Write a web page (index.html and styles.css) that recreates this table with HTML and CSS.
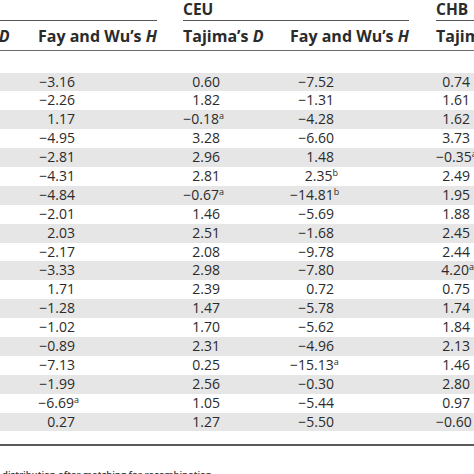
FILE: index.html
```html
<!DOCTYPE html>
<html>
<head>
<meta charset="utf-8">
<link rel="stylesheet" href="styles.css">
</head>
<body>
<div class="table">
  <div class="cols groups">
    <div class="grp grp-yri"></div>
    <div class="grp grp-ceu">CEU</div>
    <div class="grp grp-chb">CHB</div>
  </div>
  <div class="cols heads">
    <div class="hd">Tajima’s <i>D</i></div>
    <div class="hd">Fay and Wu’s <i>H</i></div>
    <div class="hd">Tajima’s <i>D</i></div>
    <div class="hd">Fay and Wu’s <i>H</i></div>
    <div class="hd">Tajima’s <i>D</i></div>
  </div>
  <div class="body">
    <div class="cols row"><div></div><div class="c2">−3.16</div><div class="c3">0.60</div><div class="c4">−7.52</div><div class="c5">0.74</div></div>
    <div class="cols row"><div></div><div class="c2">−2.26</div><div class="c3">1.82</div><div class="c4">−1.31</div><div class="c5">1.61</div></div>
    <div class="cols row"><div></div><div class="c2">1.17</div><div class="c3">−0.18<sup>a</sup></div><div class="c4">−4.28</div><div class="c5">1.62</div></div>
    <div class="cols row"><div></div><div class="c2">−4.95</div><div class="c3">3.28</div><div class="c4">−6.60</div><div class="c5">3.73</div></div>
    <div class="cols row"><div></div><div class="c2">−2.81</div><div class="c3">2.96</div><div class="c4">1.48</div><div class="c5">−0.35<sup>a</sup></div></div>
    <div class="cols row"><div></div><div class="c2">−4.31</div><div class="c3">2.81</div><div class="c4">2.35<sup>b</sup></div><div class="c5">2.49</div></div>
    <div class="cols row"><div></div><div class="c2">−4.84</div><div class="c3">−0.67<sup>a</sup></div><div class="c4">−14.81<sup>b</sup></div><div class="c5">1.95</div></div>
    <div class="cols row"><div></div><div class="c2">−2.01</div><div class="c3">1.46</div><div class="c4">−5.69</div><div class="c5">1.88</div></div>
    <div class="cols row"><div></div><div class="c2">2.03</div><div class="c3">2.51</div><div class="c4">−1.68</div><div class="c5">2.45</div></div>
    <div class="cols row"><div></div><div class="c2">−2.17</div><div class="c3">2.08</div><div class="c4">−9.78</div><div class="c5">2.44</div></div>
    <div class="cols row"><div></div><div class="c2">−3.33</div><div class="c3">2.98</div><div class="c4">−7.80</div><div class="c5">4.20<sup>a</sup></div></div>
    <div class="cols row"><div></div><div class="c2">1.71</div><div class="c3">2.39</div><div class="c4">0.72</div><div class="c5">0.75</div></div>
    <div class="cols row"><div></div><div class="c2">−1.28</div><div class="c3">1.47</div><div class="c4">−5.78</div><div class="c5">1.74</div></div>
    <div class="cols row"><div></div><div class="c2">−1.02</div><div class="c3">1.70</div><div class="c4">−5.62</div><div class="c5">1.84</div></div>
    <div class="cols row"><div></div><div class="c2">−0.89</div><div class="c3">2.31</div><div class="c4">−4.96</div><div class="c5">2.13</div></div>
    <div class="cols row"><div></div><div class="c2">−7.13</div><div class="c3">0.25</div><div class="c4">−15.13<sup>a</sup></div><div class="c5">1.46</div></div>
    <div class="cols row"><div></div><div class="c2">−1.99</div><div class="c3">2.56</div><div class="c4">−0.30</div><div class="c5">2.80</div></div>
    <div class="cols row"><div></div><div class="c2">−6.69<sup>a</sup></div><div class="c3">1.05</div><div class="c4">−5.44</div><div class="c5">0.97</div></div>
    <div class="cols row"><div></div><div class="c2">0.27</div><div class="c3">1.27</div><div class="c4">−5.50</div><div class="c5">−0.60</div></div>
  </div>
  <div class="rule"></div>
</div>
<p class="note">distribution after matching for recombination.</p>
</body>
</html>
```
FILE: styles.css
```css
html, body {
  margin: 0;
  padding: 0;
  background: #ffffff;
  overflow: hidden;
}
body {
  font-family: "Open Sans", "Liberation Sans", sans-serif;
  color: #2b2b2b;
  width: 474px;
  height: 474px;
}
.table {
  margin-left: -71px;
  width: 640px;
}
.cols {
  display: grid;
  grid-template-columns: 109px 145px 107px 146px 107px;
}
.groups {
  height: 21px;
}
.grp {
  font-weight: 700;
  font-size: 15.5px;
  line-height: 16px;
  padding-top: 0.5px;
  border-bottom: 1.5px solid #555;
  box-sizing: border-box;
  height: 21px;
}
.grp-yri {
  grid-column: 1 / span 2;
  margin-right: 26px;
}
.grp-ceu {
  grid-column: 3 / span 2;
  margin-right: 27px;
}
.grp-chb {
  grid-column: 5;
}
.heads {
  height: 30px;
  border-bottom: 1.5px solid #6a6a6a;
  box-sizing: border-box;
  padding-top: 5.5px;
}
.hd {
  font-weight: 700;
  font-size: 16px;
  line-height: 18px;
  white-space: nowrap;
}
.body {
  margin-top: 21.5px;
}
.row {
  height: 18.9px;
  font-size: 14px;
  line-height: 18.9px;
}
.row:nth-child(odd) {
  background: #e6e6e6;
}
.row > div {
  text-align: right;
  white-space: nowrap;
}
.c2 { padding-right: 108px; }
.c3 { padding-right: 70px; }
.c4 { padding-right: 102px; }
.c5 { padding-right: 73px; }
sup {
  font-size: 9px;
  line-height: 0;
  vertical-align: 5px;
  margin-right: -4px;
}
.rule {
  margin-top: 12.5px;
  border-top: 2.5px solid #5a5a5a;
}
.note {
  margin: 23px 0 0 2px;
  font-size: 9.5px;
  line-height: 12px;
  font-weight: 600;
  color: #333;
}
```
